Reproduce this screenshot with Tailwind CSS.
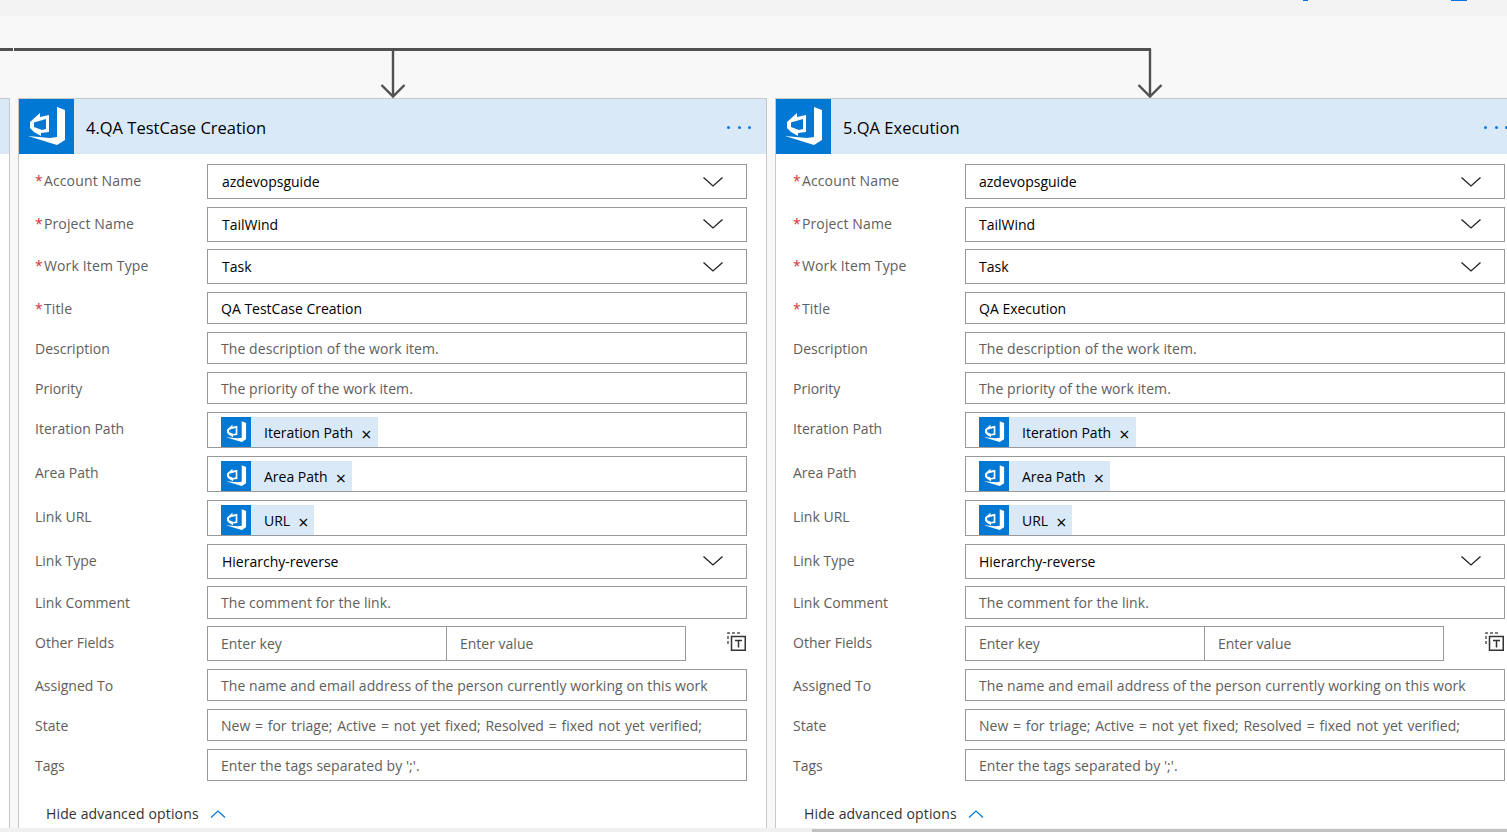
<!DOCTYPE html>
<html lang="en">
  <head>
    <meta charset="utf-8" />
    <title>Logic App Designer</title>
    <script src="https://cdn.jsdelivr.net/npm/@tailwindcss/browser@4"></script>
  </head>

  <body class="h-[832px] overflow-hidden bg-[#f8f8f8] font-['Open_Sans',sans-serif] text-[14px] text-black">
    <svg class="hidden">
      <symbol id="devops" viewBox="0 0 55 55">
        <path fill="#fff" d="M38 8L46 11V41L38 46L9 37L31 39L38 38Z" />
        <path fill="#fff" fill-rule="evenodd" d="M11 23L21 14V18L30 16V33L22 34V37L15 33L11 29ZM15 23.500V28L23 31L27 30V20Z" />
      </symbol>
      <symbol id="chevron" viewBox="0 0 20 10">
        <path fill="none" stroke="#222" stroke-width="1.3" d="M0.5 0.5L10 9L19.5 0.5" />
      </symbol>
      <symbol id="arrow" viewBox="0 0 26 50">
        <path fill="none" stroke="#505050" stroke-width="2.4" d="M13 0V47M1.500 36L13 47.500L24.500 36" />
      </symbol>
      <symbol id="textfield" viewBox="0 0 19 19">
        <path fill="none" stroke="#555" stroke-width="1.5" stroke-dasharray="3 2" d="M1 12V1H13" />
        <path fill="#fff" stroke="#333" stroke-width="1.5" d="M4.500 4.500H18.250V18.250H4.500Z" />
        <path fill="none" stroke="#333" stroke-width="1.500" d="M8 8.500H15M11.500 8.500V15.500" />
      </symbol>
    </svg>

    <!-- Top bar -->
    <div class="flex h-4 items-start bg-[#f3f3f3]">
      <div class="ml-[1303px] h-px w-[5px] bg-[#0f6fe0]"></div>
      <div class="ml-[143px] h-px w-4 bg-[#0f6fe0]"></div>
    </div>

    <!-- Canvas -->
    <div class="relative h-[812px] overflow-hidden">
      <!-- Connectors -->
      <div class="absolute top-[32px] left-0 h-[3px] w-[13px] bg-[#505050]"></div>
      <div class="absolute top-[32px] left-[14px] h-[3px] w-[1137px] bg-[#505050]"></div>
      <svg class="absolute top-[33px] left-[380px] h-[50px] w-[26px]"><use href="#arrow" /></svg>
      <svg class="absolute top-[33px] left-[1137px] h-[50px] w-[26px]"><use href="#arrow" /></svg>

      <div class="flex gap-2 pt-[82px]">
        <!-- Previous card -->
        <div class="h-[730px] w-[10px] shrink-0 border-t border-r border-[#c8c8c8] bg-white">
          <div class="h-[55px] bg-[#d9e9f8]"></div>
        </div>

        <!-- Card 4 -->
        <div class="h-[730px] w-[749px] shrink-0 border-x border-t border-[#c8c8c8] bg-white">
          <div class="flex h-[55px] items-center bg-[#d9e9f8]">
            <div class="h-[55px] w-[55px] bg-[#0078d4]"><svg class="h-[55px] w-[55px]"><use href="#devops" /></svg></div>
            <div class="mt-[3px] ml-3 text-[16.5px]">4.QA TestCase Creation</div>
            <div class="mt-[2px] mr-[15px] ml-auto flex gap-[7.5px]">
              <span class="size-[3px] rounded-full bg-[#0a7ae0]"></span>
              <span class="size-[3px] rounded-full bg-[#0a7ae0]"></span>
              <span class="size-[3px] rounded-full bg-[#0a7ae0]"></span>
            </div>
          </div>
          <div class="pt-[10px] pr-[19px] pl-4">
            <div class="mb-2 flex items-center">
              <div class="mb-[2px] w-[172px] tracking-[0.15px] text-[#605e5c]"><span class="mr-px text-[#d13438]">*</span>Account Name</div>
              <div class="flex h-[35px] flex-1 items-center border border-[#999] pr-[23px] pl-[14px]"><span>azdevopsguide</span><svg class="ml-auto h-[10px] w-5"><use href="#chevron" /></svg></div>
            </div>
            <div class="mb-[7px] flex items-center">
              <div class="mb-[2px] w-[172px] tracking-[0.15px] text-[#605e5c]"><span class="mr-px text-[#d13438]">*</span>Project Name</div>
              <div class="flex h-[35px] flex-1 items-center border border-[#999] pr-[23px] pb-px pl-[14px]"><span>TailWind</span><svg class="ml-auto h-[10px] w-5"><use href="#chevron" /></svg></div>
            </div>
            <div class="mb-2 flex items-center">
              <div class="mb-[2px] w-[172px] tracking-[0.15px] text-[#605e5c]"><span class="mr-px text-[#d13438]">*</span>Work Item Type</div>
              <div class="flex h-[35px] flex-1 items-center border border-[#999] pr-[23px] pl-[14px]"><span>Task</span><svg class="ml-auto h-[10px] w-5"><use href="#chevron" /></svg></div>
            </div>
            <div class="mb-2 flex items-center">
              <div class="w-[172px] tracking-[0.15px] text-[#605e5c]"><span class="mr-px text-[#d13438]">*</span>Title</div>
              <div class="flex h-8 flex-1 items-center border border-[#999] pl-[13px]">QA TestCase Creation</div>
            </div>
            <div class="mb-2 flex items-center">
              <div class="w-[172px] text-[#605e5c]">Description</div>
              <div class="flex h-8 flex-1 items-center border border-[#999] pl-[13px] tracking-[0.07px] text-[#605e5c]">The description of the work item.</div>
            </div>
            <div class="mb-2 flex items-center">
              <div class="w-[172px] text-[#605e5c]">Priority</div>
              <div class="flex h-8 flex-1 items-center border border-[#999] pl-[13px] tracking-[0.07px] text-[#605e5c]">The priority of the work item.</div>
            </div>
            <div class="mb-2 flex items-center">
              <div class="mb-1 w-[172px] text-[#605e5c]">Iteration Path</div>
              <div class="h-9 flex-1 border border-[#999] pt-1 pl-[13px]">
                <div class="flex h-[30px] w-fit items-center bg-[#d9e9f8] pr-[6px]">
                  <div class="mr-[13px] h-[30px] w-[30px] bg-[#0078d4]"><svg class="h-[30px] w-[30px]"><use href="#devops" /></svg></div>
                  <span>Iteration Path</span><span class="mt-[3px] ml-2 text-[18px] leading-none">×</span>
                </div>
              </div>
            </div>
            <div class="mb-2 flex items-center">
              <div class="mb-1 w-[172px] text-[#605e5c]">Area Path</div>
              <div class="h-9 flex-1 border border-[#999] pt-1 pl-[13px]">
                <div class="flex h-[30px] w-fit items-center bg-[#d9e9f8] pr-[6px]">
                  <div class="mr-[13px] h-[30px] w-[30px] bg-[#0078d4]"><svg class="h-[30px] w-[30px]"><use href="#devops" /></svg></div>
                  <span>Area Path</span><span class="mt-[3px] ml-2 text-[18px] leading-none">×</span>
                </div>
              </div>
            </div>
            <div class="mb-2 flex items-center">
              <div class="mb-1 w-[172px] text-[#605e5c]">Link URL</div>
              <div class="h-9 flex-1 border border-[#999] pt-1 pl-[13px]">
                <div class="flex h-[30px] w-fit items-center bg-[#d9e9f8] pr-[6px]">
                  <div class="mr-[13px] h-[30px] w-[30px] bg-[#0078d4]"><svg class="h-[30px] w-[30px]"><use href="#devops" /></svg></div>
                  <span>URL</span><span class="mt-[3px] ml-2 text-[18px] leading-none">×</span>
                </div>
              </div>
            </div>
            <div class="mb-[7px] flex items-center">
              <div class="mb-[2px] w-[172px] text-[#605e5c]">Link Type</div>
              <div class="flex h-[35px] flex-1 items-center border border-[#999] pr-[23px] pb-px pl-[14px]"><span>Hierarchy-reverse</span><svg class="ml-auto h-[10px] w-5"><use href="#chevron" /></svg></div>
            </div>
            <div class="mb-[7px] flex items-center">
              <div class="w-[172px] text-[#605e5c]">Link Comment</div>
              <div class="flex h-[33px] flex-1 items-center border border-[#999] pl-[13px] tracking-[0.07px] text-[#605e5c]">The comment for the link.</div>
            </div>
            <div class="mb-2 flex items-center">
              <div class="mb-[2px] w-[172px] text-[#605e5c]">Other Fields</div>
              <div class="flex h-[35px] w-[479px] border border-[#999] text-[#605e5c]">
                <div class="flex w-[239px] items-center border-r border-[#999] pl-[13px]">Enter key</div>
                <div class="flex flex-1 items-center pl-[13px]">Enter value</div>
              </div>
              <svg class="mr-px mb-[5px] ml-auto h-[19px] w-[19px]"><use href="#textfield" /></svg>
            </div>
            <div class="mb-2 flex items-center">
              <div class="w-[172px] text-[#605e5c]">Assigned To</div>
              <div class="flex h-8 flex-1 items-center border border-[#999] pl-[13px] tracking-[0.07px] text-[#605e5c]">The name and email address of the person currently working on this work</div>
            </div>
            <div class="mb-2 flex items-center">
              <div class="w-[172px] text-[#605e5c]">State</div>
              <div class="flex h-8 flex-1 items-center border border-[#999] pl-[13px] text-[#605e5c] [word-spacing:1.1px]">New = for triage; Active = not yet fixed; Resolved = fixed not yet verified;</div>
            </div>
            <div class="flex items-center">
              <div class="w-[172px] text-[#605e5c]">Tags</div>
              <div class="flex h-8 flex-1 items-center border border-[#999] pl-[13px] tracking-[0.07px] text-[#605e5c]">Enter the tags separated by ';'.</div>
            </div>
            <div class="mt-[22px] flex items-center pl-[11px] tracking-[0.15px] text-[#323130]">
              <span>Hide advanced options</span>
              <svg class="ml-[11px] h-2 w-4" viewBox="0 0 16 8"><path fill="none" stroke="#0078d4" stroke-width="1.2" d="M1 7.500L8 1L15 7.500" /></svg>
            </div>
          </div>
        </div>

        <!-- Card 5 -->
        <div class="h-[730px] w-[749px] shrink-0 border-x border-t border-[#c8c8c8] bg-white">
          <div class="flex h-[55px] items-center bg-[#d9e9f8]">
            <div class="h-[55px] w-[55px] bg-[#0078d4]"><svg class="h-[55px] w-[55px]"><use href="#devops" /></svg></div>
            <div class="mt-[3px] ml-3 text-[16.5px]">5.QA Execution</div>
            <div class="mt-[2px] mr-[15px] ml-auto flex gap-[7.5px]">
              <span class="size-[3px] rounded-full bg-[#0a7ae0]"></span>
              <span class="size-[3px] rounded-full bg-[#0a7ae0]"></span>
              <span class="size-[3px] rounded-full bg-[#0a7ae0]"></span>
            </div>
          </div>
          <div class="pt-[10px] pr-[18px] pl-[17px]">
            <div class="mb-2 flex items-center">
              <div class="mb-[2px] w-[172px] tracking-[0.15px] text-[#605e5c]"><span class="mr-px text-[#d13438]">*</span>Account Name</div>
              <div class="flex h-[35px] flex-1 items-center border border-[#999] pr-[23px] pl-[13px]"><span>azdevopsguide</span><svg class="ml-auto h-[10px] w-5"><use href="#chevron" /></svg></div>
            </div>
            <div class="mb-[7px] flex items-center">
              <div class="mb-[2px] w-[172px] tracking-[0.15px] text-[#605e5c]"><span class="mr-px text-[#d13438]">*</span>Project Name</div>
              <div class="flex h-[35px] flex-1 items-center border border-[#999] pr-[23px] pb-px pl-[13px]"><span>TailWind</span><svg class="ml-auto h-[10px] w-5"><use href="#chevron" /></svg></div>
            </div>
            <div class="mb-2 flex items-center">
              <div class="mb-[2px] w-[172px] tracking-[0.15px] text-[#605e5c]"><span class="mr-px text-[#d13438]">*</span>Work Item Type</div>
              <div class="flex h-[35px] flex-1 items-center border border-[#999] pr-[23px] pl-[13px]"><span>Task</span><svg class="ml-auto h-[10px] w-5"><use href="#chevron" /></svg></div>
            </div>
            <div class="mb-2 flex items-center">
              <div class="w-[172px] tracking-[0.15px] text-[#605e5c]"><span class="mr-px text-[#d13438]">*</span>Title</div>
              <div class="flex h-8 flex-1 items-center border border-[#999] pl-[13px]">QA Execution</div>
            </div>
            <div class="mb-2 flex items-center">
              <div class="w-[172px] text-[#605e5c]">Description</div>
              <div class="flex h-8 flex-1 items-center border border-[#999] pl-[13px] tracking-[0.07px] text-[#605e5c]">The description of the work item.</div>
            </div>
            <div class="mb-2 flex items-center">
              <div class="w-[172px] text-[#605e5c]">Priority</div>
              <div class="flex h-8 flex-1 items-center border border-[#999] pl-[13px] tracking-[0.07px] text-[#605e5c]">The priority of the work item.</div>
            </div>
            <div class="mb-2 flex items-center">
              <div class="mb-1 w-[172px] text-[#605e5c]">Iteration Path</div>
              <div class="h-9 flex-1 border border-[#999] pt-1 pl-[13px]">
                <div class="flex h-[30px] w-fit items-center bg-[#d9e9f8] pr-[6px]">
                  <div class="mr-[13px] h-[30px] w-[30px] bg-[#0078d4]"><svg class="h-[30px] w-[30px]"><use href="#devops" /></svg></div>
                  <span>Iteration Path</span><span class="mt-[3px] ml-2 text-[18px] leading-none">×</span>
                </div>
              </div>
            </div>
            <div class="mb-2 flex items-center">
              <div class="mb-1 w-[172px] text-[#605e5c]">Area Path</div>
              <div class="h-9 flex-1 border border-[#999] pt-1 pl-[13px]">
                <div class="flex h-[30px] w-fit items-center bg-[#d9e9f8] pr-[6px]">
                  <div class="mr-[13px] h-[30px] w-[30px] bg-[#0078d4]"><svg class="h-[30px] w-[30px]"><use href="#devops" /></svg></div>
                  <span>Area Path</span><span class="mt-[3px] ml-2 text-[18px] leading-none">×</span>
                </div>
              </div>
            </div>
            <div class="mb-2 flex items-center">
              <div class="mb-1 w-[172px] text-[#605e5c]">Link URL</div>
              <div class="h-9 flex-1 border border-[#999] pt-1 pl-[13px]">
                <div class="flex h-[30px] w-fit items-center bg-[#d9e9f8] pr-[6px]">
                  <div class="mr-[13px] h-[30px] w-[30px] bg-[#0078d4]"><svg class="h-[30px] w-[30px]"><use href="#devops" /></svg></div>
                  <span>URL</span><span class="mt-[3px] ml-2 text-[18px] leading-none">×</span>
                </div>
              </div>
            </div>
            <div class="mb-[7px] flex items-center">
              <div class="mb-[2px] w-[172px] text-[#605e5c]">Link Type</div>
              <div class="flex h-[35px] flex-1 items-center border border-[#999] pr-[23px] pb-px pl-[13px]"><span>Hierarchy-reverse</span><svg class="ml-auto h-[10px] w-5"><use href="#chevron" /></svg></div>
            </div>
            <div class="mb-[7px] flex items-center">
              <div class="w-[172px] text-[#605e5c]">Link Comment</div>
              <div class="flex h-[33px] flex-1 items-center border border-[#999] pl-[13px] tracking-[0.07px] text-[#605e5c]">The comment for the link.</div>
            </div>
            <div class="mb-2 flex items-center">
              <div class="mb-[2px] w-[172px] text-[#605e5c]">Other Fields</div>
              <div class="flex h-[35px] w-[479px] border border-[#999] text-[#605e5c]">
                <div class="flex w-[239px] items-center border-r border-[#999] pl-[13px]">Enter key</div>
                <div class="flex flex-1 items-center pl-[13px]">Enter value</div>
              </div>
              <svg class="mr-px mb-[5px] ml-auto h-[19px] w-[19px]"><use href="#textfield" /></svg>
            </div>
            <div class="mb-2 flex items-center">
              <div class="w-[172px] text-[#605e5c]">Assigned To</div>
              <div class="flex h-8 flex-1 items-center border border-[#999] pl-[13px] tracking-[0.07px] text-[#605e5c]">The name and email address of the person currently working on this work</div>
            </div>
            <div class="mb-2 flex items-center">
              <div class="w-[172px] text-[#605e5c]">State</div>
              <div class="flex h-8 flex-1 items-center border border-[#999] pl-[13px] text-[#605e5c] [word-spacing:1.1px]">New = for triage; Active = not yet fixed; Resolved = fixed not yet verified;</div>
            </div>
            <div class="flex items-center">
              <div class="w-[172px] text-[#605e5c]">Tags</div>
              <div class="flex h-8 flex-1 items-center border border-[#999] pl-[13px] tracking-[0.07px] text-[#605e5c]">Enter the tags separated by ';'.</div>
            </div>
            <div class="mt-[22px] flex items-center pl-[11px] tracking-[0.15px] text-[#323130]">
              <span>Hide advanced options</span>
              <svg class="ml-[11px] h-2 w-4" viewBox="0 0 16 8"><path fill="none" stroke="#0078d4" stroke-width="1.2" d="M1 7.500L8 1L15 7.500" /></svg>
            </div>
          </div>
        </div>
      </div>
    </div>

    <!-- Scrollbar strip -->
    <div class="h-1 bg-[#f0f0f0] pt-px">
      <div class="ml-[812px] h-[3px] bg-[#c1c1c1]"></div>
    </div>
  </body>
</html>
